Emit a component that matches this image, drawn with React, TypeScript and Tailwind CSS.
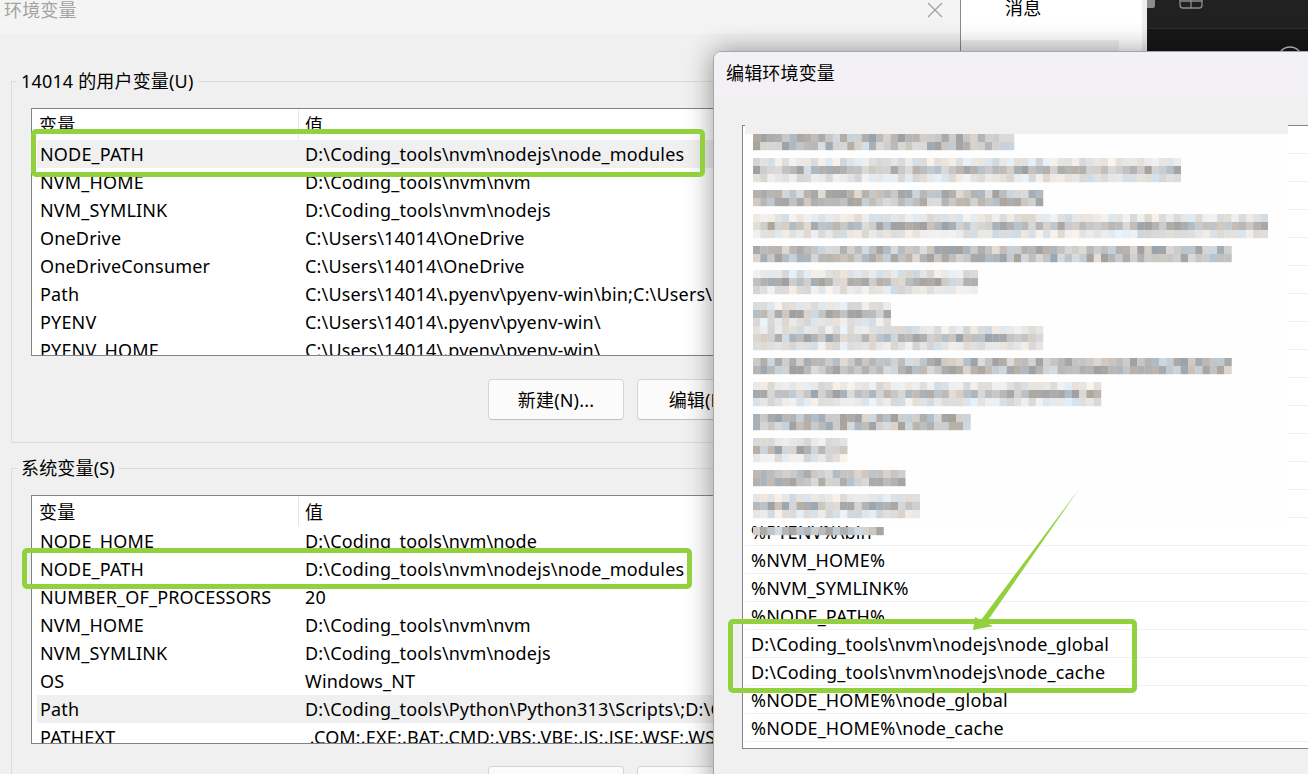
import React from 'react';

type Row = { name: string; value: string; selected?: boolean };

const userRows: Row[] = [
  { name: 'NODE_PATH', value: 'D:\\Coding_tools\\nvm\\nodejs\\node_modules', selected: true },
  { name: 'NVM_HOME', value: 'D:\\Coding_tools\\nvm\\nvm' },
  { name: 'NVM_SYMLINK', value: 'D:\\Coding_tools\\nvm\\nodejs' },
  { name: 'OneDrive', value: 'C:\\Users\\14014\\OneDrive' },
  { name: 'OneDriveConsumer', value: 'C:\\Users\\14014\\OneDrive' },
  { name: 'Path', value: 'C:\\Users\\14014\\.pyenv\\pyenv-win\\bin;C:\\Users\\14014\\.pyenv\\pyenv-win\\shims' },
  { name: 'PYENV', value: 'C:\\Users\\14014\\.pyenv\\pyenv-win\\' },
  { name: 'PYENV_HOME', value: 'C:\\Users\\14014\\.pyenv\\pyenv-win\\' },
];

const systemRows: Row[] = [
  { name: 'NODE_HOME', value: 'D:\\Coding_tools\\nvm\\node' },
  { name: 'NODE_PATH', value: 'D:\\Coding_tools\\nvm\\nodejs\\node_modules' },
  { name: 'NUMBER_OF_PROCESSORS', value: '20' },
  { name: 'NVM_HOME', value: 'D:\\Coding_tools\\nvm\\nvm' },
  { name: 'NVM_SYMLINK', value: 'D:\\Coding_tools\\nvm\\nodejs' },
  { name: 'OS', value: 'Windows_NT' },
  { name: 'Path', value: 'D:\\Coding_tools\\Python\\Python313\\Scripts\\;D:\\Coding_tools\\Python\\Python313\\', selected: true },
  { name: 'PATHEXT', value: ' .COM;.EXE;.BAT;.CMD;.VBS;.VBE;.JS;.JSE;.WSF;.WSH;.MSC' },
];

const pathRows = [
  '', '', '', '', '', '', '', '', '', '', '', '', '', '',
  '%PYENV%\\bin',
  '%NVM_HOME%',
  '%NVM_SYMLINK%',
  '%NODE_PATH%',
  'D:\\Coding_tools\\nvm\\nodejs\\node_global',
  'D:\\Coding_tools\\nvm\\nodejs\\node_cache',
  '%NODE_HOME%\\node_global',
  '%NODE_HOME%\\node_cache',
];

// blurred lines: right edge, top and bottom in page pixels
const blurred = [
  [1009, 134, 150],
  [1177, 158, 183],
  [1041, 190, 207],
  [1266, 214, 239],
  [1226, 246, 263],
  [977, 270, 294],
  [889, 302, 322],
  [1041, 326, 350],
  [1226, 358, 375],
  [1097, 382, 406],
  [969, 414, 431],
  [842, 438, 462],
  [905, 470, 487],
  [913, 494, 518],
  [881, 527, 538],
];

function Mosaic() {
  let seed = 14014;
  const next = () => {
    seed = (seed * 16807) % 2147483647;
    return seed / 2147483647;
  };
  const cells: React.ReactNode[] = [];
  blurred.forEach(([right, top, bottom], r) => {
    const rowsHigh = Math.max(1, Math.round((bottom - top) / 8));
    for (let j = 0; j < rowsHigh; j++) {
      for (let x = 753; x < right; x += 7.25) {
        const dark = rowsHigh === 3 ? j === 1 : true;
        const base = dark ? 160 + next() * 60 : 212 + next() * 30;
        const g = Math.round(base);
        const tint = next();
        const fill =
          tint < 0.2
            ? `rgb(${g - 8},${g + 2},${g + 10})`
            : tint < 0.4
              ? `rgb(${g + 8},${g + 2},${g - 6})`
              : `rgb(${g},${g},${g})`;
        cells.push(
          <rect key={`${r}-${j}-${x}`} x={x - 745} y={top - 125 + j * 8} width={7.5} height={8.2} fill={fill} />,
        );
      }
    }
  });
  return (
    <svg width="543" height="420" className="absolute left-0 top-0 blur-[0.4px]">
      {cells}
    </svg>
  );
}

function VarList({ rows, height }: { rows: Row[]; height: string }) {
  return (
    <div className={`${height} w-[900px] overflow-hidden border border-r-0 border-[#82828a] bg-white`}>
      <div className="relative flex h-[31px] items-center pl-[7px]">
        <span className="w-[266px]">变量</span>
        <span>值</span>
        <div className="absolute left-[266px] top-[1px] h-[29px] w-px bg-[#e5e5e5]" />
      </div>
      {rows.map((row) => (
        <div
          key={row.name}
          className={`ml-[5px] flex h-[28px] items-center whitespace-pre pl-[3px] ${row.selected ? 'bg-[#f0f0f0]' : ''}`}
        >
          <span className="w-[265px] shrink-0">{row.name}</span>
          <span>{row.value}</span>
        </div>
      ))}
    </div>
  );
}

function WinButton({ label }: { label: string }) {
  return (
    <div className="flex h-[41px] w-[136px] shrink-0 items-center justify-center rounded-[4px] border border-[#d5d5d5] border-b-[#c0c0c0] bg-[#fbfbfb]">
      {label}
    </div>
  );
}

function GroupBox({ title, className, children }: { title: string; className: string; children: React.ReactNode }) {
  return (
    <div className={`relative ml-[11px] border border-[#dcdcdc] pl-[19px] pt-[26px] ${className}`}>
      <span className="absolute -top-[15px] left-[5px] h-[28px] bg-[#f0f0f0] px-[4px] leading-[28px]">{title}</span>
      {children}
    </div>
  );
}

export default function App() {
  return (
    <div className="relative flex h-[774px] w-[1308px] overflow-hidden bg-white text-[18px] leading-[28px] tracking-[0.17px] text-black [font-family:'Noto_Sans','Noto_Sans_CJK_SC',sans-serif]">
      {/* Back window */}
      <div className="h-full w-[961px] shrink-0 overflow-hidden border-r border-[#8a8a8a] bg-[#f0f0f0]">
        <div className="relative flex h-[34px] items-center bg-[#f4f4f4] pb-[14px] pl-[4px] text-[#a3a3a3]">
          环境变量
          <svg width="16" height="16" viewBox="0 0 16 16" className="absolute left-[927px] top-[2px]">
            <path d="M1 1L15 15M15 1L1 15" stroke="#a0a0a0" strokeWidth="1.2" />
          </svg>
        </div>
        <GroupBox title="14014 的用户变量(U)" className="mt-[47px] h-[362px]">
          <VarList rows={userRows} height="h-[248px]" />
          <div className="ml-[457px] mt-[23px] flex gap-[13px]">
            <WinButton label="新建(N)..." />
            <WinButton label="编辑(E)..." />
          </div>
        </GroupBox>
        <GroupBox title="系统变量(S)" className="mt-[25px] h-[400px] w-[930px]">
          <VarList rows={systemRows} height="h-[249px]" />
          <div className="ml-[457px] mt-[22px] flex gap-[13px]">
            <WinButton label="新建(W)..." />
            <WinButton label="编辑(I)..." />
          </div>
        </GroupBox>
      </div>

      {/* Chat sidebar behind */}
      <div className="h-full w-[181px] shrink-0">
        <div className="-mt-[6px] h-[46px] pl-[44px]">消息</div>
        <div className="h-[40px] w-[158px] bg-[#f0f0f0]" />
      </div>

      {/* Dark app behind */}
      <div className="relative h-full flex-1 border-l-[5px] border-[#efefef] bg-[#171717]">
        <div className="h-[29px] border-b border-[#2e2e2e] bg-[#212121]" />
        <svg width="165" height="60" className="absolute left-0 top-0">
          <rect x="-4" y="-6" width="12" height="14" rx="2" fill="#8c8c8c" />
          <rect x="33" y="-8" width="22" height="16" rx="3" fill="none" stroke="#8f8f8f" strokeWidth="1.3" />
          <path d="M44 0V8M33 1H55" stroke="#8f8f8f" strokeWidth="1.3" />
          <circle cx="8" cy="56" r="5" fill="#6e6e6e" />
          <circle cx="50" cy="56" r="5" fill="#6e6e6e" />
          <circle cx="93" cy="56" r="5" fill="#6e6e6e" />
          <circle cx="143" cy="59" r="12" fill="none" stroke="#b9cbd6" strokeWidth="1.5" />
        </svg>
      </div>

      {/* Edit window */}
      <div className="absolute left-[713px] top-[51px] h-[740px] w-[620px] overflow-hidden rounded-tl-[8px] border border-[#a6a6a6] bg-[#f0f0f0] pl-[28px] pt-[73px]">
        <div className="absolute left-0 top-0 h-[44px] w-full bg-[#f3f1f5] pl-[12px] pt-[7px]">编辑环境变量</div>
        <div className="relative h-[624px] w-[600px] border border-r-0 border-[#82828a] bg-white pl-[1px]">
          {pathRows.map((text, i) => (
            <div
              key={i}
              className="ml-[1px] flex h-[28px] items-center whitespace-nowrap border-b border-[#f0f0f0] pl-[6px]"
            >
              {text}
            </div>
          ))}
          <div className="absolute -top-px left-[2px] h-[412px] w-[543px]">
            <div className="h-[9px] bg-[#f0f0f0]" />
            <div className="h-[392px] bg-[#fefefe]" />
            <Mosaic />
          </div>
        </div>
      </div>
      <div className="pointer-events-none absolute left-[713px] top-[51px] h-[740px] w-[620px] rounded-tl-[8px] shadow-[0_0_28px_rgba(0,0,0,0.4)] [clip-path:inset(-40px_0_0_-40px)]" />

      {/* Annotations */}
      <div className="absolute left-[31px] top-[129px] h-[48px] w-[674px] rounded-[5px] border-[5px] border-[#92d13d]" />
      <div className="absolute left-[22px] top-[548px] h-[41px] w-[670px] rounded-[5px] border-[5px] border-[#92d13d]" />
      <div className="absolute left-[728px] top-[619px] h-[74px] w-[409px] rounded-[5px] border-[5px] border-[#92d13d]" />
      <svg width="1308" height="774" className="pointer-events-none absolute left-0 top-0">
        <polygon points="1079,489 986,623 993,626 973,630 975,617 981,620" fill="#92d13d" />
      </svg>
    </div>
  );
}
